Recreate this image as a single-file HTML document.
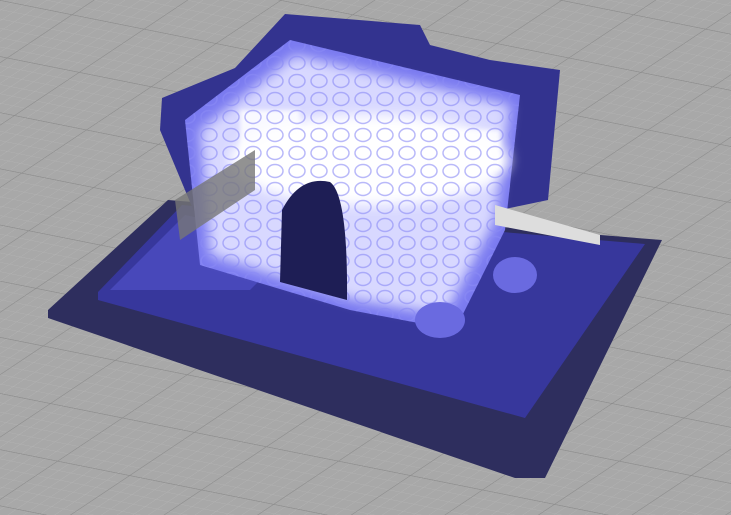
<!DOCTYPE html>
<html><head><style>html,body{margin:0;padding:0;background:#a8a8a8;width:731px;height:515px;overflow:hidden}</style></head>
<body>
<svg width="731" height="515" viewBox="0 0 731 515" xmlns="http://www.w3.org/2000/svg">
<defs>
<pattern id="minor" width="12" height="12" patternUnits="userSpaceOnUse" patternTransform="matrix(1,0.2,-0.9,0.6,0,0)">
<rect width="12" height="12" fill="#a8a8a8"/>
<path d="M0 0H12M0 0V12" stroke="#b4b4b4" stroke-width="1"/>
</pattern>
<pattern id="major" width="72" height="72" patternUnits="userSpaceOnUse" patternTransform="matrix(1,0.2,-0.9,0.6,0,0)">
<path d="M0 0H72M0 0V72" stroke="#8a8a8a" stroke-width="1.6" fill="none"/>
</pattern>
<pattern id="stones" width="22" height="18" patternUnits="userSpaceOnUse">
<ellipse cx="11" cy="9" rx="8" ry="6.5" fill="none" stroke="#8a8af5" stroke-width="1.5" opacity="0.6"/>
</pattern>
<clipPath id="bld"><polygon points="185,120 290,40 520,95 505,230 455,330 350,310 200,265"/></clipPath>
<filter id="blur" x="-20%" y="-20%" width="140%" height="140%"><feGaussianBlur stdDeviation="6"/></filter>
<filter id="blur2"><feGaussianBlur stdDeviation="2"/></filter>
</defs>
<rect width="731" height="515" fill="url(#minor)"/>
<rect width="731" height="515" fill="url(#major)"/>
<polygon points="48,310 168,200 662,240 545,478 515,478 48,318" fill="#2e2e5e"/>
<polygon points="98,292 182,205 645,244 525,418 98,300" fill="#37379c"/>
<polygon points="110,290 185,215 300,240 250,290" fill="#5050c8" opacity="0.7"/>
<polygon points="162,98 235,68 285,14 420,25 430,45 490,60 560,70 548,200 500,210 210,250 160,130" fill="#33338f"/>
<polygon points="185,120 290,40 520,95 505,230 455,330 350,310 200,265" fill="#7a7af0"/>
<g filter="url(#blur)">
<polygon points="200,130 295,55 510,105 495,220 445,315 355,300 210,255" fill="#d8d8ff"/>
<ellipse cx="370" cy="160" rx="140" ry="45" fill="#ffffff"/>
</g>
<g filter="url(#blur2)" fill="#ffffff" opacity="0.85">
<rect x="300" y="130" width="200" height="40"/>
<rect x="240" y="110" width="60" height="60"/>
</g>
<rect x="180" y="40" width="340" height="300" fill="url(#stones)" clip-path="url(#bld)"/>
<polygon points="175,200 255,150 255,190 180,240" fill="#777" opacity="0.8"/>
<polygon points="495,205 600,235 600,245 495,225" fill="#ddd"/>
<path d="M280 282 L282 210 Q300 175 330 182 Q348 195 347 300 Z" fill="#1e1e55"/>
<ellipse cx="440" cy="320" rx="25" ry="18" fill="#6a6ae0"/>
<ellipse cx="515" cy="275" rx="22" ry="18" fill="#6a6ae0"/>
</svg>
</body></html>
